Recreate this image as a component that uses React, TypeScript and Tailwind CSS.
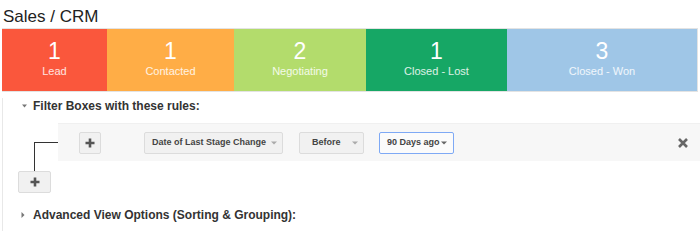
import React from "react";

const stages = [
  { n: "1", label: "Lead", w: "w-[105px]", bg: "bg-[#fa573c]" },
  { n: "1", label: "Contacted", w: "w-[127px]", bg: "bg-[#ffad46]" },
  { n: "2", label: "Negotiating", w: "w-[132px]", bg: "bg-[#b3dc6c]" },
  { n: "1", label: "Closed - Lost", w: "w-[141px]", bg: "bg-[#16a765]" },
  { n: "3", label: "Closed - Won", w: "w-[190px]", bg: "bg-[#9fc6e7]" },
];

function Plus() {
  return (
    <svg width="10" height="10" viewBox="0 0 10 10">
      <path d="M5 0.5V9.5M0.5 5H9.5" stroke="#555" strokeWidth="2.6" />
    </svg>
  );
}

function Arrow({ dark }: { dark?: boolean }) {
  return (
    <svg width="6" height="4" viewBox="0 0 6 4" className="shrink-0">
      <path d="M0 0.5H6L3 3.5Z" fill={dark ? "#666" : "#aaa"} />
    </svg>
  );
}

export default function App() {
  return (
    <div className="w-[700px] h-[231px] overflow-hidden bg-white font-['Liberation_Sans',Arial,sans-serif] text-[#222]">
      <div className="h-[28px] leading-[34px] text-[17px] pl-[3px] text-[#222]">Sales / CRM</div>
      <div className="ml-[2px] w-[696px] h-[64px] flex border-t border-r border-b border-[#e3e3e3]">
        {stages.map((s) => (
          <div key={s.label} className={`${s.w} ${s.bg} h-full flex flex-col items-center pt-[10px] text-white`}>
            <div className="text-[23px] leading-[25px]">{s.n}</div>
            <div className="text-[11px] leading-[14px] text-white/85">{s.label}</div>
          </div>
        ))}
      </div>
      <div className="ml-[2px] border-l border-[#e8e8e8] h-[200px]">
        <div className="mt-[6px] h-[16px] flex items-center pl-[19px]">
          <svg width="5" height="4" viewBox="0 0 5 4" className="mr-[6px]">
            <path d="M0 0.5H5L2.5 3.5Z" fill="#777" />
          </svg>
          <span className="text-[12px] leading-[16px] font-bold text-[#333]">Filter Boxes with these rules:</span>
        </div>
        <div className="relative mt-[9px]">
          <div className="absolute left-[31px] top-[19px] w-[24px] h-[29px] border-l border-t border-[#333]" />
          <div className="ml-[55px] h-[38px] bg-[#f7f7f7] border-t border-[#f0f0f0] flex items-center pl-[21px] pr-[12px] whitespace-nowrap">
            <div className="w-[22px] h-[22px] bg-[#f1f1f1] border border-[#dcdcdc] rounded-[2px] flex items-center justify-center">
              <Plus />
            </div>
            <div className="ml-[43px] w-[139px] h-[22px] bg-[#f1f1f1] border border-[#dcdcdc] rounded-[2px] flex items-center pl-[7px] pr-[5px] text-[9px] font-bold text-[#444]">
              <span className="flex-1">Date of Last Stage Change</span>
              <Arrow />
            </div>
            <div className="ml-[16px] w-[65px] h-[22px] bg-[#f1f1f1] border border-[#dcdcdc] rounded-[2px] flex items-center pl-[12px] pr-[5px] text-[9px] font-bold text-[#444]">
              <span className="flex-1">Before</span>
              <Arrow />
            </div>
            <div className="ml-[15px] w-[75px] h-[22px] bg-[#fbfbfb] border border-[#7ea9f5] rounded-[2px] flex items-center pl-[7px] pr-[6px] text-[9px] font-bold text-[#444]">
              <span className="flex-1">90 Days ago</span>
              <Arrow dark />
            </div>
            <div className="ml-auto">
              <svg width="10" height="10" viewBox="0 0 10 10">
                <path d="M1 1L9 9M9 1L1 9" stroke="#666" strokeWidth="2.6" />
              </svg>
            </div>
          </div>
          <div className="mt-[10px] ml-[15px] w-[33px] h-[22px] bg-[#f1f1f1] border border-[#dcdcdc] rounded-[2px] flex items-center justify-center">
            <Plus />
          </div>
        </div>
        <div className="mt-[14px] h-[16px] flex items-center pl-[18px]">
          <svg width="4" height="6" viewBox="0 0 4 6" className="mr-[8px]">
            <path d="M0.5 0L3.5 3L0.5 6Z" fill="#777" />
          </svg>
          <span className="text-[12px] leading-[16px] font-bold text-[#333]">Advanced View Options (Sorting &amp; Grouping):</span>
        </div>
      </div>
    </div>
  );
}
